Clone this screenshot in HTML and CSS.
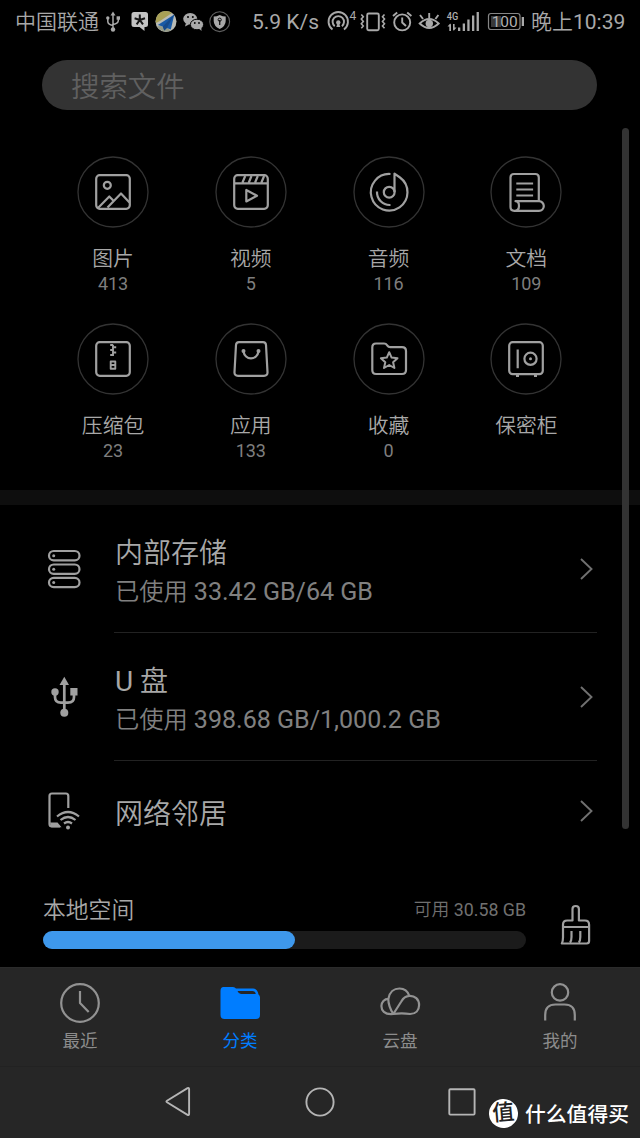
FILE: index.html
```html
<!DOCTYPE html>
<html lang="zh-CN">
<head>
<meta charset="utf-8">
<title>文件管理</title>
<link rel="stylesheet" href="styles.css">
</head>
<body>
<div class="screen">
  <header class="status">
    <span class="carrier">中国联通</span>
    <svg class="st-left" width="132" height="24" viewBox="100 10 132 24">
      <g fill="none" stroke="#a9a9a9" stroke-width="1.5">
        <path d="M113 14V29M107.800 18v3.500q0 3 5.200 4M118.300 18v2.500q0 3-5.200 4"/>
      </g>
      <g fill="#a9a9a9"><path d="M110.500 15.500l2.500-4 2.500 4z"/><circle cx="107.800" cy="18" r="1.700"/><path d="M116.600 16.300h3.400v3.400h-3.400z"/><circle cx="113" cy="29.500" r="2.200"/></g>
      <path fill="#c3c3c3" d="M134 12h11.500q2.500 0 2.500 2.500v10q0 2.500-2.500 2.500h-1v4l-5-4H134q-2.500 0-2.500-2.500v-10q0-2.500 2.500-2.500z"/>
      <path d="M139.800 20V14.500M139.800 20l5.200-1.700M139.800 20l3.200 4.400M139.800 20l-3.200 4.400M139.800 20l-5.200-1.700" stroke="#151515" stroke-width="2"/>
      <circle cx="166" cy="21.500" r="10.500" fill="#b9bbb5"/>
      <path d="M158 14.500a10.500 10.500 0 0 1 14-1.500l-12 8-4 2q-1-4 2-8.500z" fill="#a8a056"/>
      <path d="M156.800 26.500q6-2 14 4-7 4-14-4z" fill="#969b88"/>
      <path d="M174.300 14.500l-16.500 10.500 5 1.500 1.500 4 2.500-2.500 4 1.500z" fill="#195aa6"/>
      <path d="M174.300 14.500l-11.500 12 1.500 4 2.500-2.500z" fill="#174a89"/>
      <g fill="#a9a9a9"><ellipse cx="190.200" cy="18.800" rx="7" ry="5.800"/><path d="M186 23l-1 3.500 4-2z"/><ellipse cx="197" cy="24.500" rx="6.600" ry="5.300" stroke="#000" stroke-width="1"/><path d="M199 28.500l2.500 2.500-.2-4z"/></g>
      <g fill="#000"><circle cx="188" cy="17" r="1"/><circle cx="192.800" cy="17" r="1"/><circle cx="194.800" cy="23" r=".9"/><circle cx="199" cy="23" r=".9"/></g>
      <circle cx="219.700" cy="21.700" r="9.900" fill="none" stroke="#606060" stroke-width="1.100"/>
      <path d="M219.700 15q3 1.500 6 1.500v4.500q0 5-6 8-6-3-6-8v-4.500q3 0 6-1.500z" fill="#a9a9a9"/>
      <path d="M219.700 20v5" stroke="#111" stroke-width="1.300"/><circle cx="219.700" cy="19.700" r="1.600" fill="none" stroke="#111"/>
    </svg>
    <span class="speed">5.9 K/s</span>
    <svg class="st-right" width="204" height="26" viewBox="324 9 204 26">
      <g fill="none" stroke="#a9a9a9" stroke-width="1.900">
        <path d="M332.500 29.500a9.700 9.700 0 1 1 11.500 0M334.700 26.200a5.700 5.700 0 1 1 7.200 0"/>
        <rect x="367.200" y="13.500" width="11.600" height="16.700" rx="1.500"/>
        <path stroke-width="1.600" d="M361.300 14.500l2 2.300-2 2.300 2 2.300-2 2.300 2 2.300-2 2.300M384.500 14.500l-2 2.300 2 2.300-2 2.300 2 2.300-2 2.300 2 2.300"/>
        <circle cx="402.200" cy="22.400" r="8"/><path d="M402.200 17.500v5l3.800 3.500M393 16l4.200-3.500M411.400 16l-4.200-3.500"/>
        <path d="M419.700 23.500q9.500-9 19 0-9.500 9-19 0zM429.200 18v-5M423 19l-3-4M435.400 19l3-4"/>
      </g>
      <g fill="#a9a9a9"><circle cx="338.300" cy="22.500" r="2.200"/><path d="M337.300 24h2l1 3h-4z"/><circle cx="429.300" cy="23.500" r="3.700"/>
      <path d="M458 27.500h2.300V31H458zM462.700 23.500h2.300V31h-2.300zM467.300 19.500h2.300V31h-2.300zM472 15.500h2.300V31H472zM476.600 12h2.300v19h-2.300z"/>
      <path d="M449.300 31v-4.500h-1.800l2.700-3 .8 1v6.500zM453 24h1.600v3.600h1.900l-2.700 3.200-.8-1z"/></g>
      <rect x="488.500" y="13.500" width="31.500" height="16" rx="2.500" fill="none" stroke="#858585" stroke-width="1.200"/>
      <path d="M491 16h10v11h-10z" fill="#393939"/><path d="M521.700 17h2.300v9h-2.300z" fill="#a9a9a9"/>
      <text class="st-tiny" x="349.600" y="19.500">4</text>
      <text class="st-net" x="446.800" y="19.700" textLength="11.500" lengthAdjust="spacingAndGlyphs">4G</text>
      <text class="st-batt" x="504.700" y="27" text-anchor="middle">100</text>
    </svg>
    <span class="clock">晚上<span class="num">10:39</span></span>
  </header>

  <div class="search">搜索文件</div>

  <main class="content">
    <section class="cats">
      <div class="cat">
        <svg width="72" height="72" viewBox="0 0 72 72"><circle class="ring" cx="36" cy="36" r="35"/>
          <g class="ln"><rect x="19.200" y="19.200" width="33.600" height="33.600" rx="3.500"/><circle cx="30.300" cy="29.300" r="3.500"/><path d="M21 52l11.300-11.500 4.700 4.700M30.500 51.500L44 37.500l8.500 9"/></g></svg>
        <span class="cat-name">图片</span><span class="cat-num">413</span>
      </div>
      <div class="cat">
        <svg width="72" height="72" viewBox="0 0 72 72"><circle class="ring" cx="36" cy="36" r="35"/>
          <g class="ln"><rect x="19.200" y="19.200" width="33.600" height="33.600" rx="3.500"/><path d="M19.200 27.300h33.600M27.500 26.500l2.700-6.500M33.800 26.500l2.700-6.500M40.100 26.500l2.700-6.500M46.400 26.500l2.700-6.500M31.300 34v11.500L42 39.700z"/></g></svg>
        <span class="cat-name">视频</span><span class="cat-num">5</span>
      </div>
      <div class="cat">
        <svg width="72" height="72" viewBox="0 0 72 72"><circle class="ring" cx="36" cy="36" r="35"/>
          <g class="ln"><path d="M37.500 18A18.300 18.300 0 1 0 47 21.500L41.500 17.700V36"/><circle cx="36.200" cy="36.200" r="5.400"/><path d="M24 35.500A12.800 12.800 0 0 0 37.500 49"/></g></svg>
        <span class="cat-name">音频</span><span class="cat-num">116</span>
      </div>
      <div class="cat">
        <svg width="72" height="72" viewBox="0 0 72 72"><circle class="ring" cx="36" cy="36" r="35"/>
          <g class="ln"><path d="M48.800 45V21.500q0-3.500-3.500-3.500H24q-3.500 0-3.500 3.500V51q0 3.800 3.800 3.800H49a4.800 4.800 0 0 0 0-9.600H25.500q3.500 0 3.500 4.800t-4.500 4.800"/><path d="M26.300 27.500h16.800M26.300 33.500h16.800M26.300 39.500h16.800"/></g></svg>
        <span class="cat-name">文档</span><span class="cat-num">109</span>
      </div>
      <div class="cat">
        <svg width="72" height="72" viewBox="0 0 72 72"><circle class="ring" cx="36" cy="36" r="35"/>
          <g class="ln"><rect x="19.200" y="19.200" width="33.600" height="33.600" rx="3.500"/><path stroke-width="1.900" d="M33.200 22h3M36.200 24.300h3M33.200 27h3M36.200 29.500h3M33.200 32h3M36 22v11M33.700 38.500h4.600v7.300h-4.600zM33.700 42h4.600"/></g></svg>
        <span class="cat-name">压缩包</span><span class="cat-num">23</span>
      </div>
      <div class="cat">
        <svg width="72" height="72" viewBox="0 0 72 72"><circle class="ring" cx="36" cy="36" r="35"/>
          <g class="ln"><path d="M24 19.200h24q2.800 0 3 2.800l1.500 27q.2 3.800-3.500 3.800H23q-3.700 0-3.500-3.800L21 22q.2-2.800 3-2.800zM28.500 28.500a7.600 8.300 0 0 0 15 0"/></g><g class="dot"><circle cx="28.500" cy="28" r="2"/><circle cx="43.500" cy="28" r="2"/></g></svg>
        <span class="cat-name">应用</span><span class="cat-num">133</span>
      </div>
      <div class="cat">
        <svg width="72" height="72" viewBox="0 0 72 72"><circle class="ring" cx="36" cy="36" r="35"/>
          <g class="ln"><path d="M23 20.500h8q2 0 3.200 1.800t3 1.800H49q4 0 4 4V47q0 4-4 4H23q-3.700 0-3.700-4V24.500q0-4 3.700-4z"/><path stroke-width="2" d="M36.200 29.200l2.400 5.400 5.900.6-4.400 4 1.300 5.800-5.200-3-5.200 3 1.300-5.800-4.400-4 5.900-.6z"/></g></svg>
        <span class="cat-name">收藏</span><span class="cat-num">0</span>
      </div>
      <div class="cat">
        <svg width="72" height="72" viewBox="0 0 72 72"><circle class="ring" cx="36" cy="36" r="35"/>
          <g class="ln"><rect x="19.200" y="19.200" width="33.600" height="32" rx="3.500"/><circle cx="40.500" cy="35.800" r="6.100"/><path d="M27.700 26.500v18.700M26 53h3M44 53h3"/></g><circle class="dot" cx="40.500" cy="35.800" r="1.500"/></svg>
        <span class="cat-name">保密柜</span>
      </div>
    </section>

    <div class="band"></div>

    <section class="list">
      <div class="item">
        <svg width="40" height="44" viewBox="44 547 40 44"><g class="ln"><rect x="49" y="551" width="30.500" height="9.400" rx="4.700"/><rect x="49" y="564.500" width="30.500" height="9.400" rx="4.700"/><rect x="49" y="577.800" width="30.500" height="9.400" rx="4.700"/></g><g class="dot"><circle cx="53.700" cy="555.700" r="1.500"/><circle cx="53.700" cy="569.200" r="1.500"/><circle cx="53.700" cy="582.500" r="1.500"/></g></svg>
        <div class="item-body"><div class="item-text"><div class="item-title">内部存储</div><div class="item-sub">已使用 <span class="num">33.42 GB/64 GB</span></div></div>
        <svg class="chev" width="16" height="26" viewBox="0 0 16 26"><path d="M2 3l10.500 10L2 23"/></svg></div>
      </div>
      <div class="item">
        <svg width="40" height="44" viewBox="44 675 40 44"><g class="ln usb"><path d="M64.300 682v31M55 692v5q0 5.700 6 5.700h7q6 0 6-5.700v-5"/></g><g class="dot"><path d="M59.500 685l4.800-8.300L69 685z"/><circle cx="55" cy="692" r="3.700"/><rect x="70.300" y="688" width="7.200" height="7.500"/><circle cx="64.300" cy="712.700" r="4"/></g></svg>
        <div class="item-body"><div class="item-text"><div class="item-title"><span class="num">U</span> 盘</div><div class="item-sub">已使用 <span class="num">398.68 GB/1,000.2 GB</span></div></div>
        <svg class="chev" width="16" height="26" viewBox="0 0 16 26"><path d="M2 3l10.500 10L2 23"/></svg></div>
      </div>
      <div class="item item-last">
        <svg width="40" height="44" viewBox="44 789 40 44"><g class="ln"><path d="M68.300 808v-12q0-2.500-2.500-2.500H52q-2.500 0-2.500 2.500v28q0 2.500 2.500 2.500h8"/><path d="M57 816.500q11-9 22 0M60.500 820q7.500-6 15 0M64 823.500q4-3 8 0"/></g><g class="dot"><path d="M50 822.500h7.500l4 4.800H51z"/><circle cx="68" cy="827.500" r="2"/></g></svg>
        <div class="item-body"><div class="item-text"><div class="item-title">网络邻居</div></div>
        <svg class="chev" width="16" height="26" viewBox="0 0 16 26"><path d="M2 3l10.500 10L2 23"/></svg></div>
      </div>
    </section>
    <div class="scrollbar"></div>
  </main>

  <section class="space">
    <div class="space-main">
      <div class="space-head"><span class="space-name">本地空间</span><span class="space-free">可用 <span class="num">30.58 GB</span></span></div>
      <div class="track"><div class="used"></div></div>
    </div>
    <svg width="36" height="44" viewBox="558 903 36 44"><g class="ln"><path d="M572.500 920.500V909q0-3 3.200-3t3.200 3v11.500h6q4.200 0 4.200 4.200V941q0 2.500-2.500 2.500h-24.800q1.200-2 1.200-6v-12.800q0-4.200 4.200-4.200zM563 927h26M571.500 931v6q0 4-1.500 5.500M580.300 931v6q0 4-1.500 5.500"/></g></svg>
  </section>

  <nav class="tabs">
    <div class="tab"><svg width="42" height="42" viewBox="0 0 42 42"><g class="tabln"><circle cx="21" cy="21" r="18.800"/><path d="M21 9v12l8.700 9"/></g></svg><span>最近</span></div>
    <div class="tab active"><svg width="42" height="42" viewBox="0 0 42 42"><path fill="#007dff" fill-rule="evenodd" d="M4.500 5H14q2 0 3 1.600h17q4.500 0 5.500 6 1.500.8 1.500 3V33q0 4-4 4H5.500q-4 0-4-4V9q0-4 3-4zM18.500 9q1 2.900 3.500 2.900h14.800q-.5-2.900-3.500-2.900z"/></svg><span>分类</span></div>
    <div class="tab"><svg width="42" height="42" viewBox="0 0 42 42"><g class="tabln"><path d="M14.300 32C5 33 2.400 28 2.400 24c0-4 3-7.200 7-7.200C10.500 10 15 6.500 20.500 6.500c4.500 0 8.200 2.500 9.800 7.300 5.500-.3 9.800 3.400 9.800 9.200 0 5.500-3.500 9-9 9-7-1-10-1-16.800 0l8-12.500q3-5.500 8-5.700M14.300 32q-5-8-5-15"/></g></svg><span>云盘</span></div>
    <div class="tab"><svg width="42" height="42" viewBox="0 0 42 42"><g class="tabln"><circle cx="21" cy="10.400" r="8.200"/><path d="M6.200 38.500v-5.500q0-10.500 10.300-10.500h9q10.300 0 10.300 10.500v5.500"/></g></svg><span>我的</span></div>
  </nav>

  <footer class="sys">
    <svg width="30" height="34" viewBox="0 0 30 34"><path d="M4 15.700L24.500 3.200q1.600-.8 1.600 1V28.800q0 1.800-1.600 1L4 17.300q-1.200-.8 0-1.600z"/></svg>
    <svg width="34" height="34" viewBox="0 0 34 34"><circle cx="17" cy="17" r="13.600"/></svg>
    <svg width="30" height="34" viewBox="0 0 30 34"><rect x="2.300" y="4.300" width="25.300" height="25.300" rx="1"/></svg>
    <div class="mark"><span class="mark-badge">值</span><span class="mark-name">什么值得买</span></div>
  </footer>
</div>
</body>
</html>
```
FILE: styles.css
```css
* { box-sizing: border-box; }
body { margin: 0; background: #000; }
svg { display: block; flex: none; }
.screen {
  width: 640px; height: 1138px; overflow: hidden;
  display: flex; flex-direction: column;
  background: #000; color: #a8a8a8;
  font-family: Roboto, "Noto Sans CJK SC", sans-serif;
  font-weight: 350; white-space: nowrap;
}
.num { font-weight: 400; }
.status {
  height: 60px; padding: 0 0 16px 15px; flex: none;
  display: flex; align-items: center;
  font-size: 21px; line-height: 30px; color: #a9a9a9;
}
.carrier { width: 85px; }
.speed { width: 72px; margin-left: 20px; font-weight: 400; }
.clock { margin-left: 3px; }
.st-tiny { font-size: 12px; fill: #a9a9a9; font-weight: 400; }
.st-net { font-size: 11px; fill: #b0b0b0; font-weight: 500; }
.st-batt { font-size: 15.500px; fill: #b0b0b0; font-weight: 400; }

.search {
  flex: none; width: 555px; height: 50px; margin-left: 42px; padding: 4px 0 0 29px;
  border-radius: 25px; background: #333; color: #606060;
  font-size: 28.400px; line-height: 48px;
}
.content { position: relative; flex: none; height: 757px; }
.cats {
  display: grid; grid-template-columns: repeat(4, 1fr); grid-auto-rows: 167px;
  height: 380px; padding: 46px 44.800px 0 44.200px;
}
.cat { display: flex; flex-direction: column; align-items: center; }
.cat-name { margin-top: 16px; font-size: 20.800px; line-height: 30px; }
.cat-num { margin-top: -1px; font-size: 18px; line-height: 22px; color: #7e7e7e; font-weight: 400; }
.ring { fill: none; stroke: #333; stroke-width: 1.300; }
.ln { fill: none; stroke: #a0a0a0; stroke-width: 2.200; stroke-linejoin: round; }
.usb { stroke-width: 2.700; }
.dot { fill: #a0a0a0; }

.band { height: 15px; background: #0e0e0e; }
.item { display: flex; align-items: center; height: 128px; padding: 0 43px 0 44px; }
.item-body {
  flex: 1; display: flex; align-items: center; justify-content: space-between;
  height: 128px; margin-left: 30px; padding-right: 2px; border-bottom: 1px solid #222;
}
.item-text { padding: 9px 0 0 1px; }
.item-title { font-size: 28px; line-height: 38px; }
.item-sub { font-size: 24.300px; line-height: 38px; color: #808080; }
.item-sub .num { font-size: 25.050px; }
.item-last, .item-last .item-body { height: 100px; border: 0; }
.item-last .item-text { padding-top: 7px; }
.chev { fill: none; stroke: #707070; stroke-width: 1.900; }
.scrollbar {
  position: absolute; top: 18px; right: 11px; width: 7px; height: 701px;
  border-radius: 4px; background: #333;
}

.space {
  flex: none; height: 100px; padding: 26px 46px 0 43px;
  display: flex; justify-content: space-between; align-items: flex-start;
}
.space > svg { margin-top: 10px; }
.space-main { width: 483px; }
.space-head { display: flex; justify-content: space-between; align-items: center; height: 30px; }
.space-name { font-size: 22.800px; }
.space-free { font-size: 17.800px; color: #707070; }
.track { height: 18px; margin-top: 8px; border-radius: 9px; background: #1b1b1b; }
.used { width: 252px; height: 18px; border-radius: 9px; background: #3e98ec; }

.tabs {
  flex: none; height: 99px; display: grid; grid-template-columns: repeat(4, 1fr);
  background: #262626; border-top: 1px solid #2b2b2b;
}
.tab {
  display: flex; flex-direction: column; align-items: center; padding-top: 14px;
  font-size: 17.500px; line-height: 24px; font-weight: 400; color: #8c8c8c;
}
.tab span { margin-top: 5px; }
.tab.active { color: #007dff; }
.tabln { fill: none; stroke: #929292; stroke-width: 2.200; stroke-linejoin: round; }

.sys {
  flex: none; height: 72px; background: #262626; border-top: 1px solid #222;
  display: flex; align-items: center; padding: 0 0 1px 163px;
}
.sys > svg { fill: none; stroke: #b5b5b5; stroke-width: 1.900; }
.sys > svg + svg { margin-left: 110px; }
.mark { display: flex; align-items: center; margin: 23px 0 0 12px; color: #fff; }
.mark-badge {
  width: 29px; height: 29px; border-radius: 50%; background: #fff; color: #222;
  font-size: 22px; line-height: 28px; text-align: center; font-weight: 500;
  transform: rotate(-5deg);
}
.mark-name { margin-left: 7px; padding-top: 2px; font-size: 20.800px; line-height: 30px; font-weight: 500; }
```
